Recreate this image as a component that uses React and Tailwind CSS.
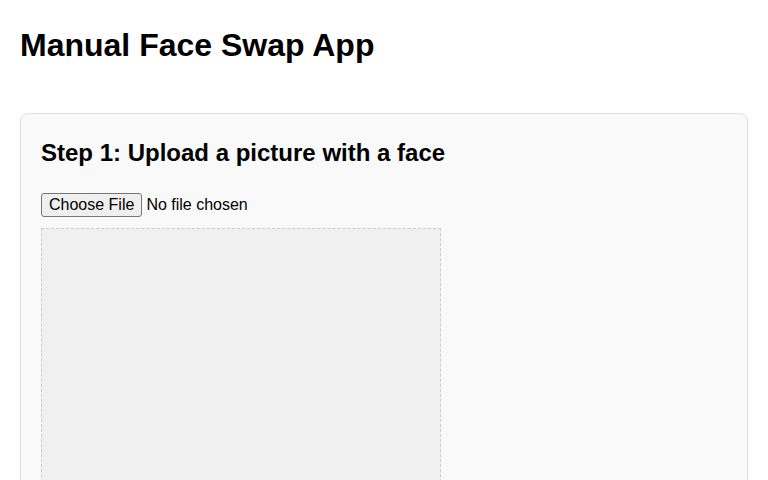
import React from "react";

function App() {
  return (
    <div className="min-h-screen bg-white px-5 pt-[27px] text-black font-['Liberation_Sans',Arial,sans-serif]">
      <h1 className="text-[32px] leading-[37px] font-bold">Manual Face Swap App</h1>

      {/* Step 1 card */}
      <div className="mt-[49px] rounded-lg border border-[#dddddd] bg-[#f9f9f9] px-5 pt-[25px] pb-5">
        <h2 className="text-2xl leading-[28px] font-bold">Step 1: Upload a picture with a face</h2>
        <div className="mt-[26px]">
          <input
            type="file"
            accept="image/*"
            className="text-base leading-[18px] file:mr-1 file:rounded-[3px] file:border file:border-[#767676] file:bg-[#efefef] file:px-[7px] file:py-[2px] file:text-black"
          />
        </div>
        <div className="mt-[11px] h-[400px] w-[400px] border border-dashed border-[#cccccc] bg-[#f0f0f0]"></div>
      </div>
    </div>
  );
}

export default App;
